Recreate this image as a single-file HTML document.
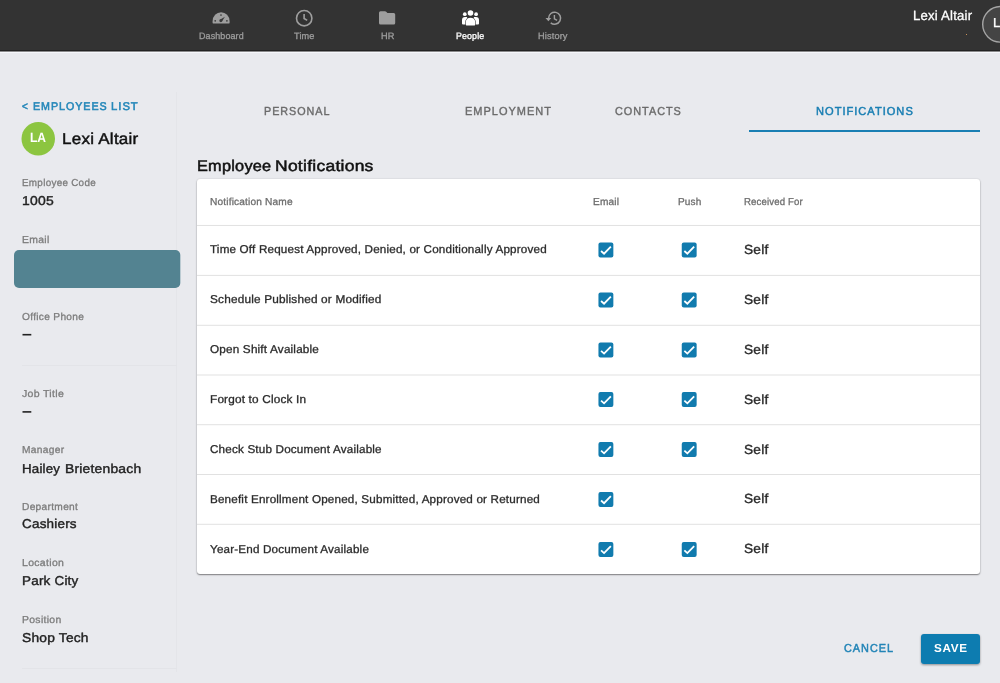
<!DOCTYPE html>
<html lang="en">
<head>
<meta charset="utf-8">
<title>Employee Notifications</title>
<style>
html,body{margin:0;padding:0;}
body{width:1000px;height:683px;overflow:hidden;position:relative;background:#e9eaee;font-family:"Liberation Sans",Arial,sans-serif;}
#tx{position:absolute;left:0;top:0;width:1000px;height:683px;will-change:transform;}
.t{position:absolute;white-space:nowrap;text-rendering:geometricPrecision;line-height:20px;height:20px;transform-origin:0 0;}
#topbar{position:absolute;left:0;top:0;width:1000px;height:50px;background:#333333;}
.ln{position:absolute;left:0;width:1000px;height:1px;}
#shapes{position:absolute;left:0;top:0;}
.ico{position:absolute;}
#udot{position:absolute;left:965.5px;top:33.6px;width:1.4px;height:1.4px;background:#c9925a;}
#vsep{position:absolute;left:176px;top:92px;width:1px;height:580px;background:#e4e5e9;}
.hsep{position:absolute;left:22px;width:155px;height:1px;background:#e3e4e8;}
#tabline{position:absolute;left:749px;top:130px;width:231px;height:2px;background:#1a7fb3;}
#card{position:absolute;left:197px;top:179px;width:783px;height:395px;background:#fff;border-radius:3px;box-shadow:0 1px 1.5px rgba(0,0,0,0.45),0 0 2px rgba(0,0,0,0.12);}
</style>
</head>
<body>
<div id="topbar"></div>
<div class="ln" style="top:50px;background:#222222"></div>
<div class="ln" style="top:51px;background:#8a8a8b"></div>
<div class="ln" style="top:52px;background:#f6f7fb"></div>
<!-- nav icons -->
<svg class="ico" style="left:212px;top:12px" width="18" height="12" viewBox="0 0 18 12"><path fill="#9e9e9e" d="M0.6 9.3 A8.5 9.1 0 0 1 17.6 9.3 V10.4 A1.2 1.2 0 0 1 16.4 11.6 H1.8 A1.2 1.2 0 0 1 0.6 10.4 Z"/><g fill="#3a3a3a"><circle cx="9" cy="3" r="0.85"/><circle cx="3.2" cy="8.8" r="0.85"/><circle cx="14.9" cy="8.8" r="0.85"/><circle cx="8.8" cy="8.8" r="1.45"/><path d="M7.9 7.7 L12.9 4.7 L10 9.6 Z"/></g></svg>
<svg class="ico" style="left:295px;top:9px" width="18" height="19" viewBox="0 0 18 19"><circle cx="9.2" cy="9.2" r="7.7" fill="none" stroke="#9e9e9e" stroke-width="1.6"/><path d="M9.1 4.9 V9.5 L12.2 11.4" fill="none" stroke="#9e9e9e" stroke-width="1.6"/></svg>
<svg class="ico" style="left:379px;top:11px" width="17" height="14" viewBox="0 0 17 14"><path fill="#9e9e9e" d="M1.5 0.2 H6 Q6.7 0.2 7.2 0.8 L8.4 2 H14.7 A1.5 1.5 0 0 1 16.2 3.5 V11.9 A1.5 1.5 0 0 1 14.7 13.4 H1.5 A1.5 1.5 0 0 1 0 11.9 V1.7 A1.5 1.5 0 0 1 1.5 0.2 Z"/></svg>
<svg class="ico" style="left:461px;top:9px" width="19" height="18" viewBox="-0.5 -0.5 19 18"><g fill="#fff"><circle cx="3.3" cy="4.7" r="1.85"/><circle cx="14.6" cy="4.7" r="1.85"/><path d="M0.5 14.1 V10.5 A3 3 0 0 1 3.5 7.5 H5.6 V15.1 H1.5 A1 1 0 0 1 0.5 14.1 Z"/><path d="M17.5 14.1 V10.5 A3 3 0 0 0 14.5 7.5 H12.4 V15.1 H16.5 A1 1 0 0 0 17.5 14.1 Z"/><circle cx="9" cy="3.5" r="2.8" stroke="#333" stroke-width="0.9" paint-order="stroke"/><path d="M4.4 14.9 V11.6 A4.7 4.3 0 0 1 13.6 11.6 V14.9 A1.2 1.2 0 0 1 12.4 16.1 H5.6 A1.2 1.2 0 0 1 4.4 14.9 Z" stroke="#333" stroke-width="1.1" paint-order="stroke"/></g></svg>
<svg class="ico" style="left:545px;top:10px" width="18" height="17" viewBox="0 0 18 17"><path d="M3.6 8.2 A6 6 0 1 1 5.75 12.8" fill="none" stroke="#9e9e9e" stroke-width="1.5"/><path d="M0.5 8 H6.3 L3.4 11.3 Z" fill="#9e9e9e"/><path d="M9.4 5 V8.8 L12.1 10.4" fill="none" stroke="#9e9e9e" stroke-width="1.4"/></svg>
<div id="udot"></div>

<!-- sidebar + main shapes -->
<div id="vsep"></div>
<div class="hsep" style="top:365px"></div>
<div class="hsep" style="top:668px"></div>
<div id="tabline"></div>
<div id="card"></div>

<svg id="shapes" width="1000" height="683" viewBox="0 0 1000 683">
<defs><filter id="sh" x="-20%" y="-20%" width="140%" height="160%"><feDropShadow dx="0" dy="1" stdDeviation="1" flood-color="#000" flood-opacity="0.4"/></filter></defs>
<circle cx="1000.5" cy="24.3" r="17.8" fill="#444444" stroke="#a5a5a5" stroke-width="1.4"/>
<circle cx="38.25" cy="138.75" r="16.75" fill="#8cc540"/>
<rect x="14" y="250" width="166.3" height="38" rx="5" ry="5" fill="#538391"/>
<rect x="22.5" y="333.9" width="8.8" height="1.6" fill="#222"/>
<rect x="22.5" y="411.1" width="8.8" height="1.6" fill="#222"/>
<rect x="921" y="634" width="59" height="30" rx="3" ry="3" fill="#0f7bb0" filter="url(#sh)"/>
<rect x="197" y="224.95" width="783" height="1" fill="#e1e1e1"/>
<rect x="197" y="274.90" width="783" height="1" fill="#e1e1e1"/>
<rect x="197" y="324.80" width="783" height="1" fill="#e1e1e1"/>
<rect x="197" y="374.50" width="783" height="1" fill="#e1e1e1"/>
<rect x="197" y="424.20" width="783" height="1" fill="#e1e1e1"/>
<rect x="197" y="474.00" width="783" height="1" fill="#e1e1e1"/>
<rect x="197" y="523.80" width="783" height="1" fill="#e1e1e1"/>
<g transform="translate(598.45,242.50)"><rect x="0" y="0" width="14.9" height="15" rx="2" ry="2" fill="#117bae"/><path d="M2.6 8.5 L5.6 11.2 L12.4 4.2" fill="none" stroke="#fff" stroke-width="1.8"/></g>
<g transform="translate(681.75,242.50)"><rect x="0" y="0" width="14.9" height="15" rx="2" ry="2" fill="#117bae"/><path d="M2.6 8.5 L5.6 11.2 L12.4 4.2" fill="none" stroke="#fff" stroke-width="1.8"/></g>
<g transform="translate(598.45,292.50)"><rect x="0" y="0" width="14.9" height="15" rx="2" ry="2" fill="#117bae"/><path d="M2.6 8.5 L5.6 11.2 L12.4 4.2" fill="none" stroke="#fff" stroke-width="1.8"/></g>
<g transform="translate(681.75,292.50)"><rect x="0" y="0" width="14.9" height="15" rx="2" ry="2" fill="#117bae"/><path d="M2.6 8.5 L5.6 11.2 L12.4 4.2" fill="none" stroke="#fff" stroke-width="1.8"/></g>
<g transform="translate(598.45,342.40)"><rect x="0" y="0" width="14.9" height="15" rx="2" ry="2" fill="#117bae"/><path d="M2.6 8.5 L5.6 11.2 L12.4 4.2" fill="none" stroke="#fff" stroke-width="1.8"/></g>
<g transform="translate(681.75,342.40)"><rect x="0" y="0" width="14.9" height="15" rx="2" ry="2" fill="#117bae"/><path d="M2.6 8.5 L5.6 11.2 L12.4 4.2" fill="none" stroke="#fff" stroke-width="1.8"/></g>
<g transform="translate(598.45,392.10)"><rect x="0" y="0" width="14.9" height="15" rx="2" ry="2" fill="#117bae"/><path d="M2.6 8.5 L5.6 11.2 L12.4 4.2" fill="none" stroke="#fff" stroke-width="1.8"/></g>
<g transform="translate(681.75,392.10)"><rect x="0" y="0" width="14.9" height="15" rx="2" ry="2" fill="#117bae"/><path d="M2.6 8.5 L5.6 11.2 L12.4 4.2" fill="none" stroke="#fff" stroke-width="1.8"/></g>
<g transform="translate(598.45,442.10)"><rect x="0" y="0" width="14.9" height="15" rx="2" ry="2" fill="#117bae"/><path d="M2.6 8.5 L5.6 11.2 L12.4 4.2" fill="none" stroke="#fff" stroke-width="1.8"/></g>
<g transform="translate(681.75,442.10)"><rect x="0" y="0" width="14.9" height="15" rx="2" ry="2" fill="#117bae"/><path d="M2.6 8.5 L5.6 11.2 L12.4 4.2" fill="none" stroke="#fff" stroke-width="1.8"/></g>
<g transform="translate(598.45,492.00)"><rect x="0" y="0" width="14.9" height="15" rx="2" ry="2" fill="#117bae"/><path d="M2.6 8.5 L5.6 11.2 L12.4 4.2" fill="none" stroke="#fff" stroke-width="1.8"/></g>
<g transform="translate(598.45,541.90)"><rect x="0" y="0" width="14.9" height="15" rx="2" ry="2" fill="#117bae"/><path d="M2.6 8.5 L5.6 11.2 L12.4 4.2" fill="none" stroke="#fff" stroke-width="1.8"/></g>
<g transform="translate(681.75,541.90)"><rect x="0" y="0" width="14.9" height="15" rx="2" ry="2" fill="#117bae"/><path d="M2.6 8.5 L5.6 11.2 L12.4 4.2" fill="none" stroke="#fff" stroke-width="1.8"/></g>
</svg>
<div id="tx">
<span class="t" id="n1" style="left:199px;top:26px;transform:scaleX(0.9695);font-size:9.2px;color:#9e9e9e;letter-spacing:0.138px;-webkit-text-stroke:0.3px #9e9e9e;">Dashboard</span>
<span class="t" id="n2" style="left:294px;top:26px;transform:scaleX(0.9946);font-size:9.2px;color:#9e9e9e;letter-spacing:0.138px;-webkit-text-stroke:0.3px #9e9e9e;">Time</span>
<span class="t" id="n3" style="left:381px;top:26px;transform:scaleX(0.9980);font-size:9.2px;color:#9e9e9e;letter-spacing:0.138px;-webkit-text-stroke:0.3px #9e9e9e;">HR</span>
<span class="t" id="n4" style="left:456px;top:26px;transform:scaleX(0.9605);font-size:9.2px;color:#ffffff;letter-spacing:0.138px;-webkit-text-stroke:0.3px #ffffff;">People</span>
<span class="t" id="n5" style="left:538px;top:26px;transform:scaleX(1.0005);font-size:9.2px;color:#9e9e9e;letter-spacing:0.138px;-webkit-text-stroke:0.3px #9e9e9e;">History</span>
<span class="t" id="n6" style="left:913px;top:6px;transform:scaleX(0.9828);font-size:13.4px;color:#ffffff;letter-spacing:0.201px;-webkit-text-stroke:0.3px #ffffff;">Lexi Altair</span>
<span class="t" id="n7" style="left:993px;top:13px;transform:scaleX(1.0000);font-size:13px;color:#ffffff;letter-spacing:0.195px;-webkit-text-stroke:0.3px #ffffff;">L</span>
<span class="t" id="s1" style="left:22px;top:97px;transform:scaleX(0.9000);font-size:11.2px;color:#2487b9;letter-spacing:1.008px;-webkit-text-stroke:0.55px #2487b9;">&lt;</span>
<span class="t" id="s1b" style="left:33px;top:97px;transform:scaleX(0.9547);font-size:11.2px;color:#2487b9;letter-spacing:1.008px;-webkit-text-stroke:0.55px #2487b9;">EMPLOYEES</span>
<span class="t" id="s1c" style="left:111px;top:97px;transform:scaleX(1.0029);font-size:11.2px;color:#2487b9;letter-spacing:1.008px;-webkit-text-stroke:0.55px #2487b9;">LIST</span>
<span class="t" id="s2" style="left:30px;top:128px;transform:scaleX(0.8980);font-size:13.4px;color:#ffffff;letter-spacing:0.000px;font-weight:700;">LA</span>
<span class="t" id="s3" style="left:62px;top:130px;transform:scaleX(1.0763);font-size:15.8px;color:#111111;letter-spacing:0.237px;-webkit-text-stroke:0.45px #111111;">Lexi Altair</span>
<span class="t" id="f1l" style="left:22px;top:174px;transform:scaleX(0.9761);font-size:10.1px;color:#7c7c7c;letter-spacing:0.303px;-webkit-text-stroke:0.3px #7c7c7c;">Employee Code</span>
<span class="t" id="f1v" style="left:22px;top:191px;transform:scaleX(1.0905);font-size:12.8px;color:#222222;letter-spacing:0.192px;-webkit-text-stroke:0.4px #222222;">1005</span>
<span class="t" id="f2l" style="left:22px;top:231px;transform:scaleX(1.0299);font-size:10.1px;color:#7c7c7c;letter-spacing:0.303px;-webkit-text-stroke:0.3px #7c7c7c;">Email</span>
<span class="t" id="f3l" style="left:22px;top:308px;transform:scaleX(1.0064);font-size:10.1px;color:#7c7c7c;letter-spacing:0.303px;-webkit-text-stroke:0.3px #7c7c7c;">Office Phone</span>
<span class="t" id="f4l" style="left:22px;top:385px;transform:scaleX(1.0434);font-size:10.1px;color:#7c7c7c;letter-spacing:0.303px;-webkit-text-stroke:0.3px #7c7c7c;">Job Title</span>
<span class="t" id="f5l" style="left:22px;top:441px;transform:scaleX(1.0102);font-size:10.1px;color:#7c7c7c;letter-spacing:0.303px;-webkit-text-stroke:0.3px #7c7c7c;">Manager</span>
<span class="t" id="f5v" style="left:22px;top:459px;transform:scaleX(1.0400);font-size:12.8px;color:#222222;letter-spacing:0.192px;-webkit-text-stroke:0.4px #222222;">Hailey</span>
<span class="t" id="f5w" style="left:65px;top:459px;transform:scaleX(1.0848);font-size:12.8px;color:#222222;letter-spacing:0.192px;-webkit-text-stroke:0.4px #222222;">Brietenbach</span>
<span class="t" id="f6l" style="left:22px;top:498px;transform:scaleX(1.0074);font-size:10.1px;color:#7c7c7c;letter-spacing:0.303px;-webkit-text-stroke:0.3px #7c7c7c;">Department</span>
<span class="t" id="f6v" style="left:22px;top:514px;transform:scaleX(1.0532);font-size:12.8px;color:#222222;letter-spacing:0.192px;-webkit-text-stroke:0.4px #222222;">Cashiers</span>
<span class="t" id="f7l" style="left:22px;top:554px;transform:scaleX(1.0393);font-size:10.1px;color:#7c7c7c;letter-spacing:0.303px;-webkit-text-stroke:0.3px #7c7c7c;">Location</span>
<span class="t" id="f7v" style="left:22px;top:571px;transform:scaleX(1.0529);font-size:12.8px;color:#222222;letter-spacing:0.192px;-webkit-text-stroke:0.4px #222222;">Park City</span>
<span class="t" id="f8l" style="left:22px;top:611px;transform:scaleX(1.0317);font-size:10.1px;color:#7c7c7c;letter-spacing:0.303px;-webkit-text-stroke:0.3px #7c7c7c;">Position</span>
<span class="t" id="f8v" style="left:22px;top:628px;transform:scaleX(1.0769);font-size:12.8px;color:#222222;letter-spacing:0.192px;-webkit-text-stroke:0.4px #222222;">Shop Tech</span>
<span class="t" id="t1" style="left:264px;top:102px;transform:scaleX(0.9299);font-size:11.6px;color:#6b6b6b;letter-spacing:1.044px;-webkit-text-stroke:0.4px #6b6b6b;">PERSONAL</span>
<span class="t" id="t2" style="left:465px;top:102px;transform:scaleX(0.9483);font-size:11.6px;color:#6b6b6b;letter-spacing:1.044px;-webkit-text-stroke:0.4px #6b6b6b;">EMPLOYMENT</span>
<span class="t" id="t3" style="left:615px;top:102px;transform:scaleX(0.9376);font-size:11.6px;color:#6b6b6b;letter-spacing:1.044px;-webkit-text-stroke:0.4px #6b6b6b;">CONTACTS</span>
<span class="t" id="t4" style="left:816px;top:102px;transform:scaleX(0.9563);font-size:11.6px;color:#1a7fb3;letter-spacing:1.044px;-webkit-text-stroke:0.5px #1a7fb3;">NOTIFICATIONS</span>
<span class="t" id="h1" style="left:197px;top:157px;transform:scaleX(1.0590);font-size:15.4px;color:#111111;letter-spacing:0.231px;-webkit-text-stroke:0.5px #111111;">Employee</span>
<span class="t" id="h2" style="left:275px;top:157px;transform:scaleX(1.1357);font-size:15.4px;color:#111111;letter-spacing:0.231px;-webkit-text-stroke:0.5px #111111;">Notifications</span>
<span class="t" id="c1" style="left:210px;top:193px;transform:scaleX(1.0058);font-size:10.1px;color:#6e6e6e;letter-spacing:0.151px;-webkit-text-stroke:0.3px #6e6e6e;">Notification Name</span>
<span class="t" id="c2" style="left:593px;top:193px;transform:scaleX(1.0027);font-size:10.1px;color:#6e6e6e;letter-spacing:0.151px;-webkit-text-stroke:0.3px #6e6e6e;">Email</span>
<span class="t" id="c3" style="left:678px;top:193px;transform:scaleX(0.9948);font-size:10.1px;color:#6e6e6e;letter-spacing:0.151px;-webkit-text-stroke:0.3px #6e6e6e;">Push</span>
<span class="t" id="c4" style="left:744px;top:193px;transform:scaleX(0.9526);font-size:10.1px;color:#6e6e6e;letter-spacing:0.151px;-webkit-text-stroke:0.3px #6e6e6e;">Received For</span>
<span class="t" id="r0" style="left:210px;top:240px;transform:scaleX(1.0245);font-size:11.4px;color:#2b2b2b;letter-spacing:0.171px;-webkit-text-stroke:0.3px #2b2b2b;">Time Off Request Approved, Denied, or Conditionally Approved</span>
<span class="t" id="q0" style="left:744px;top:240px;transform:scaleX(1.0383);font-size:13.2px;color:#2b2b2b;letter-spacing:0.198px;-webkit-text-stroke:0.38px #2b2b2b;">Self</span>
<span class="t" id="r1" style="left:210px;top:290px;transform:scaleX(1.0373);font-size:11.4px;color:#2b2b2b;letter-spacing:0.171px;-webkit-text-stroke:0.3px #2b2b2b;">Schedule Published or Modified</span>
<span class="t" id="q1" style="left:744px;top:290px;transform:scaleX(1.0383);font-size:13.2px;color:#2b2b2b;letter-spacing:0.198px;-webkit-text-stroke:0.38px #2b2b2b;">Self</span>
<span class="t" id="r2" style="left:210px;top:340px;transform:scaleX(1.0309);font-size:11.4px;color:#2b2b2b;letter-spacing:0.171px;-webkit-text-stroke:0.3px #2b2b2b;">Open Shift Available</span>
<span class="t" id="q2" style="left:744px;top:340px;transform:scaleX(1.0383);font-size:13.2px;color:#2b2b2b;letter-spacing:0.198px;-webkit-text-stroke:0.38px #2b2b2b;">Self</span>
<span class="t" id="r3" style="left:210px;top:390px;transform:scaleX(1.0356);font-size:11.4px;color:#2b2b2b;letter-spacing:0.171px;-webkit-text-stroke:0.3px #2b2b2b;">Forgot to Clock In</span>
<span class="t" id="q3" style="left:744px;top:390px;transform:scaleX(1.0383);font-size:13.2px;color:#2b2b2b;letter-spacing:0.198px;-webkit-text-stroke:0.38px #2b2b2b;">Self</span>
<span class="t" id="r4" style="left:210px;top:440px;transform:scaleX(1.0255);font-size:11.4px;color:#2b2b2b;letter-spacing:0.171px;-webkit-text-stroke:0.3px #2b2b2b;">Check Stub Document Available</span>
<span class="t" id="q4" style="left:744px;top:440px;transform:scaleX(1.0383);font-size:13.2px;color:#2b2b2b;letter-spacing:0.198px;-webkit-text-stroke:0.38px #2b2b2b;">Self</span>
<span class="t" id="r5" style="left:210px;top:490px;transform:scaleX(1.0245);font-size:11.4px;color:#2b2b2b;letter-spacing:0.171px;-webkit-text-stroke:0.3px #2b2b2b;">Benefit Enrollment Opened, Submitted, Approved or Returned</span>
<span class="t" id="q5" style="left:744px;top:489px;transform:scaleX(1.0383);font-size:13.2px;color:#2b2b2b;letter-spacing:0.198px;-webkit-text-stroke:0.38px #2b2b2b;">Self</span>
<span class="t" id="r6" style="left:210px;top:540px;transform:scaleX(1.0239);font-size:11.4px;color:#2b2b2b;letter-spacing:0.171px;-webkit-text-stroke:0.3px #2b2b2b;">Year-End Document Available</span>
<span class="t" id="q6" style="left:744px;top:539px;transform:scaleX(1.0383);font-size:13.2px;color:#2b2b2b;letter-spacing:0.198px;-webkit-text-stroke:0.38px #2b2b2b;">Self</span>
<span class="t" id="b1" style="left:844px;top:639px;transform:scaleX(0.9406);font-size:11.6px;color:#2385b7;letter-spacing:1.044px;-webkit-text-stroke:0.5px #2385b7;">CANCEL</span>
<span class="t" id="b2" style="left:934px;top:639px;transform:scaleX(1.0090);font-size:11.6px;color:#ffffff;letter-spacing:0.696px;font-weight:700;">SAVE</span>
</div>
</body>
</html>
